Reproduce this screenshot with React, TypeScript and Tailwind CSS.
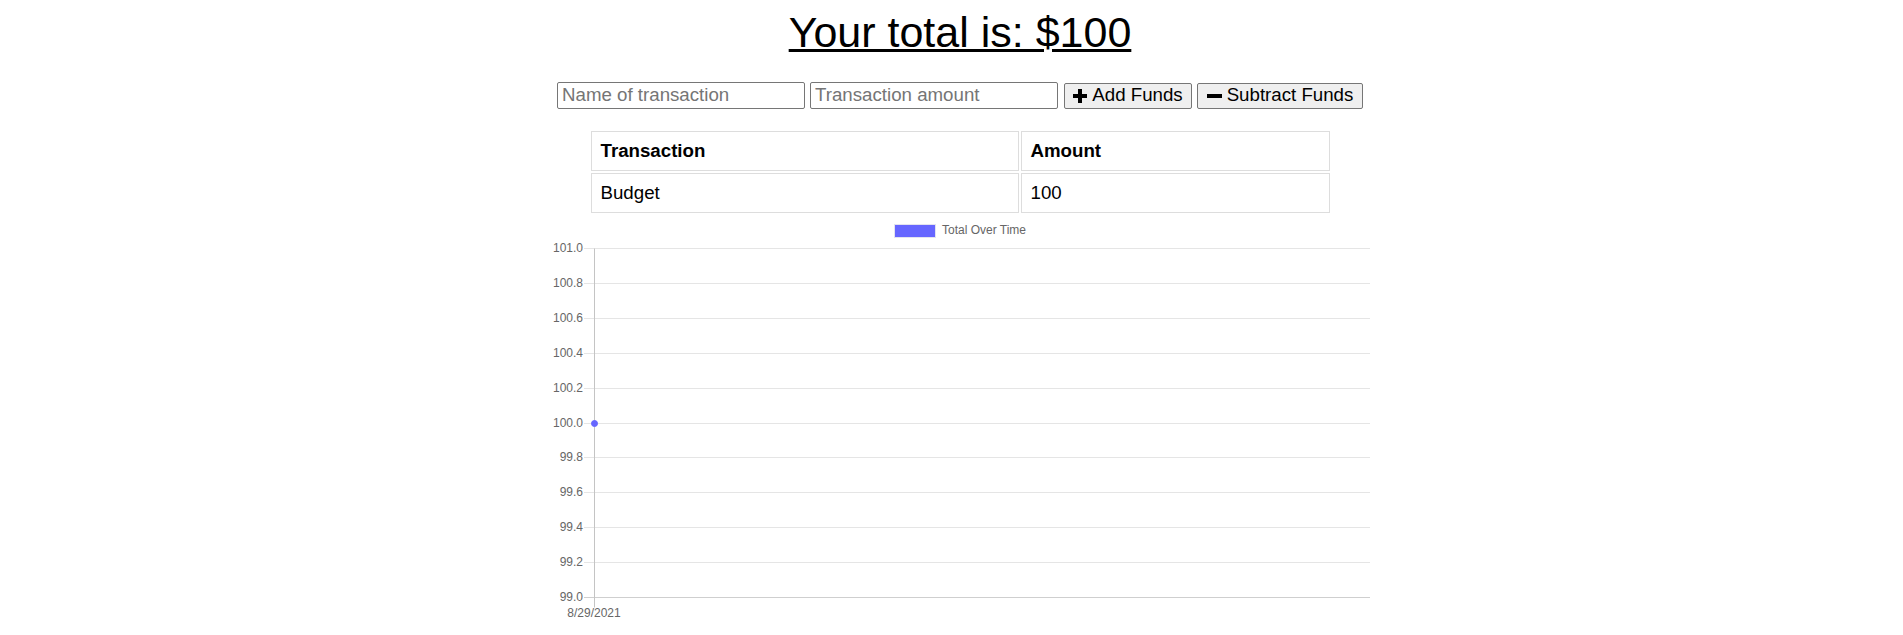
import React from "react";

const yLabels = ["101.0", "100.8", "100.6", "100.4", "100.2", "100.0", "99.8", "99.6", "99.4", "99.2", "99.0"];

function PlusIcon() {
  return (
    <svg width="14" height="14" viewBox="0 0 14 14" className="shrink-0">
      <rect x="5" y="0" width="4" height="14" fill="#000" />
      <rect x="0" y="5" width="14" height="4" fill="#000" />
    </svg>
  );
}

function MinusIcon() {
  return (
    <svg width="15" height="14" viewBox="0 0 15 14" className="shrink-0">
      <rect x="0" y="5" width="15" height="4" fill="#000" />
    </svg>
  );
}

function Chart() {
  const ys = yLabels.map((_, i) => Math.round(33 + i * 34.9) + 0.5);
  return (
    <svg width="820" height="410" viewBox="0 0 820 410" className="block">
      {/* legend */}
      <rect x="344" y="9" width="42" height="14" fill="#e3e3ef" />
      <rect x="345" y="10" width="40" height="12" fill="#6666ff" />
      <text x="392" y="16" dominantBaseline="middle" fontSize="12" fill="#666" fontFamily="'Liberation Sans', Arial, sans-serif">
        Total Over Time
      </text>
      {/* horizontal grid lines */}
      {ys.map((y, i) => (
        <line
          key={i}
          x1="34"
          x2="820"
          y1={y}
          y2={y}
          stroke={i === ys.length - 1 ? "#cfcfcf" : "#e5e5e5"}
          strokeWidth="1"
        />
      ))}
      {/* y labels */}
      {ys.map((y, i) => (
        <text
          key={i}
          x="33"
          y={y}
          textAnchor="end"
          dominantBaseline="middle"
          fontSize="12"
          fill="#666"
          fontFamily="'Liberation Sans', Arial, sans-serif"
        >
          {yLabels[i]}
        </text>
      ))}
      {/* vertical axis line */}
      <line x1="44.5" x2="44.5" y1={ys[0]} y2={ys[ys.length - 1] + 10} stroke="#c4c4c4" strokeWidth="1" />
      {/* x label */}
      <text
        x="44"
        y="399"
        textAnchor="middle"
        dominantBaseline="middle"
        fontSize="12"
        fill="#666"
        fontFamily="'Liberation Sans', Arial, sans-serif"
      >
        8/29/2021
      </text>
      {/* data point */}
      <circle cx="44.5" cy={ys[5]} r="3" fill="#6666ff" stroke="#6666ff" strokeWidth="1" />
    </svg>
  );
}

export default function App() {
  return (
    <div className="min-h-screen bg-white pl-[17px] font-['Liberation_Sans',Arial,sans-serif] text-black flex flex-col items-center">
      <h1 className="mt-[8px] text-[43px] leading-[48px] font-normal underline decoration-[3px]">
        Your total is: $100
      </h1>

      <div className="mt-[26px] flex items-center text-[18.7px]">
        <input
          type="text"
          placeholder="Name of transaction"
          className="w-[248px] h-[27px] border border-[#767676] rounded-[2px] pl-[4px] pr-[2px] placeholder-[#757575] outline-none bg-white"
        />
        <input
          type="text"
          placeholder="Transaction amount"
          className="ml-[5px] w-[248px] h-[27px] border border-[#767676] rounded-[2px] pl-[4px] pr-[2px] placeholder-[#757575] outline-none bg-white"
        />
        <button className="ml-[6px] w-[128px] h-[26px] flex items-center justify-center gap-[5px] border border-[#767676] rounded-[2px] bg-[#efefef] leading-none">
          <PlusIcon />
          <span>Add Funds</span>
        </button>
        <button className="ml-[5px] w-[166px] h-[26px] flex items-center justify-center gap-[5px] border border-[#767676] rounded-[2px] bg-[#efefef] leading-none">
          <MinusIcon />
          <span>Subtract Funds</span>
        </button>
      </div>

      <table className="mt-[20px] border-separate border-spacing-[2px] text-[18.7px]">
        <thead>
          <tr>
            <th className="w-[428px] h-[40px] border border-[#dddddd] px-[9px] py-0 text-left font-bold align-middle">
              Transaction
            </th>
            <th className="w-[309px] h-[40px] border border-[#dddddd] px-[9px] py-0 text-left font-bold align-middle">
              Amount
            </th>
          </tr>
        </thead>
        <tbody>
          <tr>
            <td className="h-[40px] border border-[#dddddd] px-[9px] py-0 align-middle">Budget</td>
            <td className="h-[40px] border border-[#dddddd] px-[9px] py-0 align-middle">100</td>
          </tr>
        </tbody>
      </table>

      <Chart />
    </div>
  );
}
